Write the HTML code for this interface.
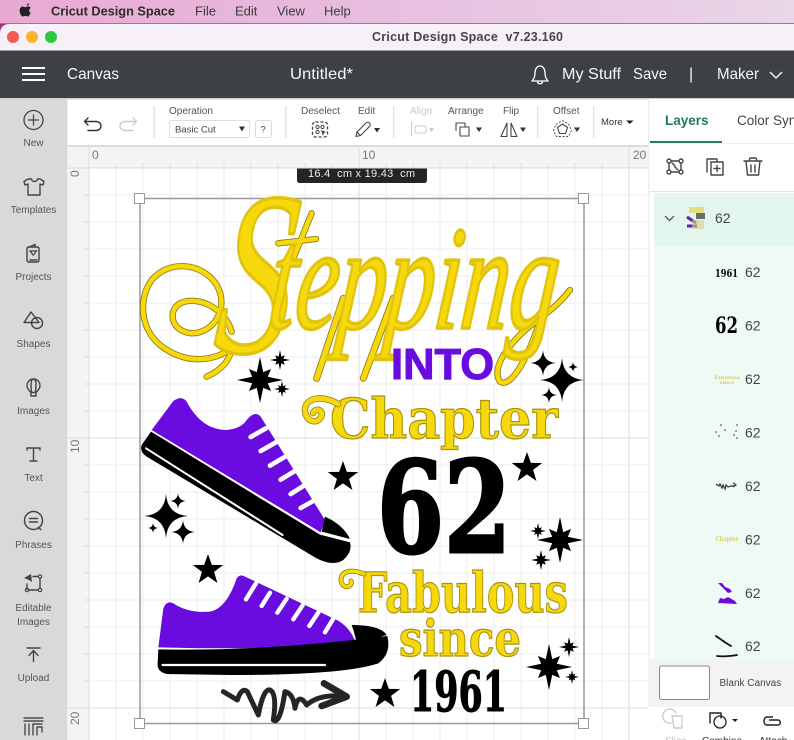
<!DOCTYPE html>
<html><head><meta charset="utf-8"><title>Cricut Design Space</title>
<style>
html,body{margin:0;padding:0;background:#fff;width:794px;height:740px;overflow:hidden}
svg{display:block;position:absolute;left:0;top:0;font-family:"Liberation Sans",sans-serif}
.side{font-size:10px;fill:#555;text-anchor:middle}
.tb{font-size:10px;fill:#555}
.ic{fill:none;stroke:#444;stroke-width:1.4;stroke-linecap:round;stroke-linejoin:round}
.rn{font-size:21px;fill:#444}
.y{fill:#f6d80c;stroke:#a8940f;stroke-width:1.2;font-family:"DejaVu Serif",serif;font-weight:bold}
.k{fill:#000;font-family:"DejaVu Serif",serif;font-weight:bold}
</style></head><body>
<svg width="794" height="740" viewBox="0 0 794 740" xmlns="http://www.w3.org/2000/svg">
<defs>
<linearGradient id="menu" x1="0" x2="1" y1="0" y2="0"><stop offset="0" stop-color="#e9a9d2"/><stop offset=".5" stop-color="#e8bfe0"/><stop offset="1" stop-color="#e9d6e8"/></linearGradient>
<path id="sp" d="M0-100Q7-7 100 0Q7 7 0 100Q-7 7-100 0Q-7-7 0-100Z"/>
<path id="st8" d="M0-100L14-34L48-48L34-14L100 0L34 14L48 48L14 34L0 100L-14 34L-48 48L-34 14L-100 0L-34-14L-48-48L-14-34Z"/>
<path id="st5" d="M0-100L24-32L95-31L38 12L59 81L0 40L-59 81L-38 12L-95-31L-24-32Z"/>
</defs>

<!-- macOS menu bar -->
<rect width="794" height="24" fill="url(#menu)"/>
<path transform="translate(2 -2.500)" d="M25 8.200c1 0 2-.9 2-2.300-1.200.1-2.300 1-2.200 2.300zM27.900 16.700c-.6 1.200-1.300 2.300-2.300 2.300s-1.100-.6-2.300-.6-1.400.6-2.300.6c-1.500 0-3.400-3.300-3.400-6 0-2.600 1.700-4 3.200-4 1 0 1.900.7 2.500.7s1.600-.8 2.700-.8c.7 0 2 .3 2.700 1.500-2.200 1.400-1.700 4.500.2 5.200z" fill="#222"/>
<text x="51" y="15.500" font-size="13" font-weight="bold" fill="#2d2a2e" textLength="124" lengthAdjust="spacingAndGlyphs">Cricut Design Space</text>
<g font-size="13" fill="#3c3a3e"><text x="195" y="15.500">File</text><text x="235" y="15.500">Edit</text><text x="277" y="15.500">View</text><text x="324" y="15.500">Help</text></g>

<!-- title bar -->
<path d="M0 35Q0 24 12 24H794V51H0Z" fill="#f6f0f8"/>
<rect y="23" width="794" height="1" fill="#8d7f8d"/>
<path d="M0 24H10Q0 24 0 34Z" fill="#a0308c"/>
<circle cx="13" cy="37" r="6" fill="#f25a52"/><circle cx="32" cy="37" r="6" fill="#f8b32b"/><circle cx="51" cy="37" r="6" fill="#2dc840"/>
<text x="372" y="41" font-size="12.500" font-weight="bold" fill="#454548" textLength="191" lengthAdjust="spacing" xml:space="preserve">Cricut Design Space  v7.23.160</text>

<!-- header -->
<rect y="50.500" width="794" height="48" fill="#3d4045"/>
<g fill="#fff"><rect x="22" y="67" width="23" height="2"/><rect x="22" y="73" width="23" height="2"/><rect x="22" y="79" width="23" height="2"/></g>
<g font-size="16" fill="#f6f6f6">
<text x="67" y="79" textLength="52" lengthAdjust="spacingAndGlyphs">Canvas</text><text x="290" y="79" textLength="63" lengthAdjust="spacingAndGlyphs">Untitled*</text>
<text x="562" y="79" textLength="59" lengthAdjust="spacingAndGlyphs">My Stuff</text><text x="633" y="79" textLength="34" lengthAdjust="spacingAndGlyphs">Save</text><text x="689" y="79">|</text><text x="717" y="79" textLength="42" lengthAdjust="spacingAndGlyphs">Maker</text>
</g>
<path d="M532 81c2-2 3-4 3-8 0-4 2-7 5-7s5 3 5 7c0 4 1 6 3 8zM537.500 81.500c.3 3 4.700 3 5 0" fill="none" stroke="#fff" stroke-width="1.300" stroke-linecap="round" stroke-linejoin="round"/>
<path d="M770 72l6 6 6-6" fill="none" stroke="#fff" stroke-width="1.300"/>

<!-- toolbar -->
<rect y="98.500" width="794" height="47" fill="#fff"/>
<rect y="145" x="67" width="581" height="2" fill="#dcdcdc"/>
<rect y="98" width="794" height="1.500" fill="#cfcfcf"/>
<g fill="#e4e4e4"><rect x="153.500" y="106" width="1.500" height="32"/><rect x="285" y="106" width="1.500" height="32"/><rect x="393" y="106" width="1.500" height="32"/><rect x="537" y="106" width="1.500" height="32"/><rect x="593" y="106" width="1.500" height="32"/></g>
<path class="ic" d="M88 118l-3.500 3.500 3.500 3.500M85 121.500h11c3 0 5 2 5 4.500s-2 4.500-5 4.500h-8" style="stroke:#333"/>
<path class="ic" d="M133 118l3.500 3.500-3.500 3.500M136 121.500h-11c-3 0-5 2-5 4.500s2 4.500 5 4.500h8" style="stroke:#ccc"/>
<text class="tb" x="169" y="114">Operation</text>
<rect x="169.500" y="120.500" width="80" height="17" rx="2" fill="#fff" stroke="#ddd"/>
<text x="175" y="132.500" font-size="9.500" fill="#444">Basic Cut</text>
<path d="M239 126.500h6l-3 5z" fill="#333"/>
<rect x="255.500" y="120.500" width="16" height="17" rx="2" fill="#fff" stroke="#ddd"/>
<text x="260.500" y="132.500" font-size="9.500" fill="#444">?</text>
<text class="tb" x="301" y="114">Deselect</text>
<rect x="312.500" y="122" width="15" height="15" rx="3" fill="none" stroke="#444" stroke-width="1.300" stroke-dasharray="3 2"/>
<g fill="none" stroke="#444"><circle cx="317.500" cy="127" r="1.600"/><circle cx="322.500" cy="127" r="1.600"/><circle cx="317.500" cy="132" r="1.600"/></g><path d="M321 130l5 2-2 1-1 3z" fill="#444"/>
<text class="tb" x="358" y="114">Edit</text>
<path class="ic" d="M356 136.500l1-4.500 9-9c1-1 2.500-1 3.500 0s.8 2.500 0 3.500l-9 9zM357 132l3.500 3.500" style="stroke-width:1.100"/>
<path d="M374 128h6l-3 4.500z" fill="#333"/>
<text class="tb" x="410" y="114" style="fill:#c9c9c9">Align</text>
<path d="M411.500 122v14" stroke="#ccc" stroke-width="1.200"/><rect x="415" y="126" width="11" height="7" rx="1.500" fill="none" stroke="#ccc"/><path d="M429 128h5l-2.500 4z" fill="#ccc"/>
<text class="tb" x="448" y="114">Arrange</text>
<path class="ic" d="M456 130.500v-7.500h9v4M460 127h9v9h-9z" style="stroke-width:1.100"/>
<path d="M476 127.500h6l-3 4.500z" fill="#333"/>
<text class="tb" x="503" y="114">Flip</text>
<path class="ic" d="M507 123l-6 13.500h6zM511 123l6 13.500h-6z" style="stroke-width:1.100"/>
<path d="M520 127.500h6l-3 4.500z" fill="#333"/>
<text class="tb" x="553" y="114">Offset</text>
<path class="ic" d="M562.500 124l5 3.500-2 6h-6l-2-6z" style="stroke-width:1.100"/>
<path d="M556 124.500l6.500-4 6.500 4 2.500 6-3 6h-12l-3-6z" fill="none" stroke="#444" stroke-width=".9" stroke-dasharray="2 1.600"/>
<path d="M574 127.500h6l-3 4.500z" fill="#333"/>
<text x="601" y="125" font-size="9.500" fill="#333">More</text>
<path d="M626 120.500h7.500l-3.750 3.500z" fill="#222"/>

<!-- sidebar -->
<rect y="99" width="67" height="641" fill="#d9d9d9"/>
<circle cx="33.500" cy="120" r="9.500" fill="none" stroke="#444" stroke-width="1.300"/><path d="M33.500 114.500v11M28 120h11" stroke="#444" stroke-width="1.300"/>
<text class="side" x="33.500" y="146">New</text>
<path class="ic" d="M28 179l-4 2.500 1 3.500 3-1v11h12v-11l3 1 1-3.500-4-2.500-2.500 0c-.5 2-1.500 2.500-3 2.500s-2.500-.5-3-2.500z"/>
<text class="side" x="33.500" y="213">Templates</text>
<rect x="27" y="247" width="12" height="15" rx="1.500" class="ic"/><path class="ic" d="M29 247l6-2.500v2.500M30 260h7"/><path d="M30 251h6.500l-3.250 4.200z" fill="none" stroke="#444" stroke-width="1.200"/>
<text class="side" x="33.500" y="280">Projects</text>
<path class="ic" d="M31 312l-7 10.500h15z"/><circle class="ic" cx="37" cy="323" r="5.500"/>
<text class="side" x="33.500" y="347">Shapes</text>
<path class="ic" d="M33.500 379c-3.800 0-6.500 3-6.500 6.500 0 3 2 5 4 7h5c2-2 4-4 4-7 0-3.500-2.700-6.500-6.500-6.500zM33.500 379c-1.800 0-2.500 3-2.500 6.500 0 3 .5 5 .5 7M33.500 379c1.800 0 2.500 3 2.500 6.500 0 3-.5 5-.5 7M31 392.500h5v3.500h-5z"/>
<text class="side" x="33.500" y="414">Images</text>
<path class="ic" d="M27 450v-2h13v2M33.500 448v13M30 461h7"/>
<text class="side" x="33.500" y="481">Text</text>
<circle class="ic" cx="33.500" cy="520.500" r="9"/><path class="ic" d="M29.500 518.500h8M29.500 522h8M38 527.500l3 2"/>
<text class="side" x="33.500" y="548">Phrases</text>
<path d="M24 578l7-4 1 8-3-2z" fill="#444"/>
<path class="ic" d="M27 584v5.500M29 590h9M40 578v10M33 576.500h5"/>
<g fill="none" stroke="#444" stroke-width="1.200"><circle cx="27" cy="590" r="1.700"/><circle cx="40" cy="590" r="1.700"/><circle cx="40" cy="576.500" r="1.700"/></g>
<text class="side" x="33.500" y="611">Editable</text>
<text class="side" x="33.500" y="625">Images</text>
<path class="ic" d="M27 648h13M33.500 661.500v-10M29 655.500l4.500-5 4.500 5"/>
<text class="side" x="33.500" y="681">Upload</text>
<path class="ic" d="M24 718h19M24 721h19M25 735v-11M29 735v-11M33 735v-11h9M37 735v-8h5v5" style="stroke-width:1.200;stroke:#333"/>
<rect x="67" y="99" width="1" height="641" fill="#efefef"/>

<!-- rulers and canvas -->
<rect x="68" y="147" width="580" height="593" fill="#fff"/>
<rect x="68" y="147" width="580" height="21" fill="#f4f4f4"/>
<rect x="68" y="168" width="21" height="572" fill="#f4f4f4"/>
<g stroke="#ecedf0" stroke-width="1">
<path d="M116 168V740M143 168V740M170 168V740M197 168V740M224 168V740M251 168V740M278 168V740M305 168V740M332 168V740M386 168V740M413 168V740M440 168V740M467 168V740M494 168V740M521 168V740M548 168V740M575 168V740M602 168V740"/>
<path d="M89 195H648M89 222H648M89 249H648M89 276H648M89 303H648M89 330H648M89 357H648M89 384H648M89 411H648M89 465H648M89 492H648M89 519H648M89 546H648M89 573H648M89 600H648M89 627H648M89 654H648M89 681H648"/>
</g>
<g stroke="#dcdcde" stroke-width="1">
<path d="M89 147V740M359 147V740M629 147V740M68 168H648M68 438H648M68 708H648"/>
<path d="M116 163V168M143 163V168M170 163V168M197 163V168M224 163V168M251 163V168M278 163V168M305 163V168M332 163V168M386 163V168M413 163V168M440 163V168M467 163V168M494 163V168M521 163V168M548 163V168M575 163V168M602 163V168"/>
<path d="M84 195H89M84 222H89M84 249H89M84 276H89M84 303H89M84 330H89M84 357H89M84 384H89M84 411H89M84 465H89M84 492H89M84 519H89M84 546H89M84 573H89M84 600H89M84 627H89M84 654H89M84 681H89"/>
</g>
<g font-size="12" fill="#777">
<text x="92" y="159">0</text><text x="362" y="159">10</text><text x="633" y="159">20</text>
<text transform="translate(79 177) rotate(-90)">0</text><text transform="translate(79 453) rotate(-90)">10</text><text transform="translate(79 725) rotate(-90)">20</text>
</g>

<!-- tooltip -->
<path d="M297 168.500H427V180Q427 183 424 183H300Q297 183 297 180Z" fill="#242424"/>
<text x="308" y="177" font-size="11" fill="#eee" xml:space="preserve" textLength="107" lengthAdjust="spacing">16.4  cm x 19.43  cm</text>

<!-- selection -->
<rect x="140" y="198.500" width="444" height="525" fill="none" stroke="#999" stroke-width="1.500"/>
<g fill="#fff" stroke="#999" stroke-width="1"><rect x="134.500" y="193.500" width="10" height="10"/><rect x="578.500" y="193.500" width="10" height="10"/><rect x="134.500" y="718.500" width="10" height="10"/><rect x="578.500" y="718.500" width="10" height="10"/></g>

<!-- flourishes of the script heading -->
<g transform="translate(130 165) scale(.3333)" fill="none" stroke-linecap="round">
<path d="M230 635C275 615 300 585 305 550C250 590 165 600 90 540C30 490 25 400 65 345C115 285 215 290 260 360C300 430 250 505 185 505C125 500 110 440 150 415C205 390 285 430 305 500M1110 650C1090 620 1110 570 1170 510C1220 460 1270 440 1320 375M1110 650C1140 670 1190 590 1225 480M545 145L490 280M445 235L558 222" stroke="#8a7a14" stroke-width="19"/>
<path d="M230 635C275 615 300 585 305 550C250 590 165 600 90 540C30 490 25 400 65 345C115 285 215 290 260 360C300 430 250 505 185 505C125 500 110 440 150 415C205 390 285 430 305 500M1110 650C1090 620 1110 570 1170 510C1220 460 1270 440 1320 375M1110 650C1140 670 1190 590 1225 480M545 145L490 280M445 235L558 222" stroke="#f6d80c" stroke-width="14"/>
<path d="M560 640L640 400M700 640L790 400" stroke="#8a7a14" stroke-width="21"/>
<path d="M560 640L640 400M700 640L790 400" stroke="#f6d80c" stroke-width="16"/>
</g>

<!-- heading text -->
<text transform="skewX(-6) scale(.65 1)" fill="#f6d80c" stroke="#e0c40c" stroke-width="3.500" stroke-linejoin="round" font-family="Liberation Serif,serif" font-style="italic"><tspan x="383" y="352" font-size="233">S</tspan><tspan x="462" y="328" font-size="148">tepping</tspan></text>
<text x="391" y="379" font-size="44" font-weight="bold" fill="#6a0ce0" textLength="103" lengthAdjust="spacingAndGlyphs" stroke="#6a0ce0" stroke-width="1">INTO</text>
<text class="y" x="330" y="438" font-size="55" textLength="228" lengthAdjust="spacingAndGlyphs">Chapter</text>
<path d="M338 404C322 394 304 398 305 411C306 423 320 425 322 414C320 408 315 409 313 413" fill="none" stroke="#8a7a14" stroke-width="6.500" stroke-linecap="round"/>
<path d="M338 404C322 394 304 398 305 411C306 423 320 425 322 414C320 408 315 409 313 413" fill="none" stroke="#f6d80c" stroke-width="5" stroke-linecap="round"/>
<text class="k" x="377" y="552" font-size="126" textLength="134" lengthAdjust="spacingAndGlyphs" stroke="#000" stroke-width="3">62</text>
<text class="y" x="358" y="612" font-size="55" textLength="210" lengthAdjust="spacingAndGlyphs">Fabulous</text>
<path d="M364 574C350 568 340 572 341 581C343 590 353 587 351 581" fill="none" stroke="#8a7a14" stroke-width="5" stroke-linecap="round"/>
<path d="M364 574C350 568 340 572 341 581C343 590 353 587 351 581" fill="none" stroke="#f6d80c" stroke-width="3.500" stroke-linecap="round"/>
<text class="y" x="399" y="656" font-size="50" textLength="122" lengthAdjust="spacingAndGlyphs">since</text>
<text class="k" x="410" y="711" font-size="55" textLength="97" lengthAdjust="spacingAndGlyphs" stroke="#000" stroke-width="1">1961</text>

<!-- sneakers -->
<g transform="translate(130 385) scale(.3333)">
<path d="M65 135L130 48Q155 30 170 50Q215 135 290 135Q335 130 350 105Q375 75 392 95L585 405L572 442Z" fill="#6a0ce0"/>
<path d="M585 395Q640 420 660 462L575 440ZM63 140L35 180Q28 200 50 215L560 520Q610 545 640 525Q668 500 660 472L570 449Z" fill="#000"/>
<path d="M48 190L458 450" stroke="#fff" stroke-width="6" stroke-linecap="round"/>
<path d="M362 156L408 130M392 198L438 172M420 242L466 215M452 284L498 256M482 327L528 298M512 369L555 345" stroke="#fff" stroke-width="14" stroke-linecap="round"/>
</g>
<g transform="translate(130 550) scale(.3333)">
<path d="M85 292L100 175Q110 150 130 160Q175 190 240 185Q290 175 320 85Q330 70 345 80L610 205Q660 225 680 285Q400 300 85 292Z" fill="#6a0ce0"/>
<path d="M665 225Q750 225 770 255L680 282Q675 250 665 225ZM85 298Q400 305 772 258Q785 310 745 340Q640 375 300 375L110 372Q80 365 83 340Z" fill="#000"/>
<path d="M98 345H585" stroke="#fff" stroke-width="7" stroke-linecap="round"/>
<path d="M348 148L378 100M395 168L420 128M442 188L470 146M490 208L518 166M538 228L566 186M585 247L610 206" stroke="#fff" stroke-width="13" stroke-linecap="round"/>
<path d="M280 425L322 450Q335 410 352 425L385 495Q400 415 420 420Q442 430 430 510Q450 525 465 425Q490 430 495 475Q505 425 530 465Q570 430 645 440" fill="none" stroke="#252525" stroke-width="15" stroke-linecap="round" stroke-linejoin="round"/>
<path d="M582 400L650 440L575 468" fill="none" stroke="#252525" stroke-width="20" stroke-linecap="round" stroke-linejoin="round"/>
</g>

<!-- stars -->
<g fill="#000">
<use href="#st8" transform="translate(260 380) scale(.23)"/><use href="#st8" transform="translate(280 360) scale(.1)"/><use href="#st8" transform="translate(282 389) scale(.08)"/>
<use href="#sp" transform="translate(562 380) scale(.22)"/><use href="#sp" transform="translate(543 363) scale(.13)"/><use href="#sp" transform="translate(573 367) scale(.05)"/><use href="#sp" transform="translate(549 395) scale(.08)"/>
<use href="#sp" transform="translate(166 516) scale(.22)"/><use href="#sp" transform="translate(178 501) scale(.08)"/><use href="#sp" transform="translate(183 532) scale(.12)"/><use href="#sp" transform="translate(153 528) scale(.05)"/>
<use href="#st8" transform="translate(560 540) scale(.23)"/><use href="#st8" transform="translate(538 531) scale(.08)"/><use href="#st8" transform="translate(541 560) scale(.1)"/>
<use href="#st8" transform="translate(549 667) scale(.23)"/><use href="#st8" transform="translate(569 647) scale(.1)"/><use href="#st8" transform="translate(572 677) scale(.07)"/>
<use href="#st5" transform="translate(343 477) scale(.16)"/><use href="#st5" transform="translate(527 468) scale(.16)"/><use href="#st5" transform="translate(208 570) scale(.16)"/><use href="#st5" transform="translate(385 694) scale(.16)"/>
</g>

<!-- layers panel -->
<rect x="648" y="99" width="146" height="641" fill="#fff"/>
<rect x="648" y="99" width="1.500" height="641" fill="#efefef"/>
<text x="665" y="125" font-size="13.500" font-weight="bold" fill="#217a5c">Layers</text>
<text x="737" y="125" font-size="13.500" fill="#444">Color Sync</text>
<rect x="650" y="141" width="72" height="2.500" fill="#1f7f5f"/>
<rect x="650" y="143" width="144" height="1" fill="#eee"/>
<g class="ic" fill="none" stroke="#333" stroke-width="1.300">
<path d="M671 161h8M669 163v7M681 163v7M671 172h8M672 163l3 3M678 170l-3-3" />
<circle cx="669" cy="161" r="2"/><circle cx="681" cy="161" r="2"/><circle cx="669" cy="172" r="2"/><circle cx="681" cy="172" r="2"/>
<path d="M707 172v-13h10v3M711 162h12v13h-12zM717 165.500v6M714 168.500h6"/>
<path d="M744 161h18M749 161l1-3h6l1 3M746 161l1.500 14h11l1.500-14M751 165v7M755 165v7"/>
</g>
<rect x="650" y="191" width="144" height="1" fill="#e5e5e5"/>
<rect x="654" y="193" width="140" height="53" fill="#e2f5ef"/>
<rect x="654" y="246" width="140" height="413" fill="#effaf7"/>
<path d="M665 216l4.500 4.500 4.500-4.500" fill="none" stroke="#444" stroke-width="1.200"/>
<rect x="689" y="207" width="15" height="6" fill="#e8dc80"/><rect x="696" y="213" width="9" height="6" fill="#333" opacity=".7"/>
<path d="M687 217l9 6" stroke="#5a20c0" stroke-width="3"/><path d="M687 226h10" stroke="#5a20c0" stroke-width="3"/><rect x="692" y="220" width="12" height="9" fill="#d8d080" opacity=".6"/>
<text class="rn" x="715" y="223" style="font-size:14px">62</text>
<g font-size="14" fill="#444">
<text x="745" y="277">62</text><text x="745" y="330.500">62</text><text x="745" y="384">62</text><text x="745" y="437.500">62</text><text x="745" y="491">62</text><text x="745" y="544.500">62</text><text x="745" y="598">62</text><text x="745" y="651">62</text>
</g>
<text class="k" x="715" y="277" font-size="11" textLength="23" lengthAdjust="spacingAndGlyphs">1961</text>
<text class="k" x="715" y="333" font-size="22" textLength="23" lengthAdjust="spacingAndGlyphs">62</text>
<text x="727" y="379" font-size="5" font-weight="bold" font-family="DejaVu Serif,serif" fill="#d9cc60" text-anchor="middle">Fabulous</text>
<text x="727" y="384" font-size="5" font-weight="bold" font-family="DejaVu Serif,serif" fill="#d9cc60" text-anchor="middle">since</text>
<g fill="#333"><circle cx="721" cy="425" r=".8"/><circle cx="737" cy="425" r=".8"/><circle cx="716" cy="432" r=".8"/><circle cx="725" cy="430" r=".8"/><circle cx="736" cy="431" r=".8"/><circle cx="719" cy="436" r=".8"/><circle cx="737" cy="438" r=".8"/><circle cx="734" cy="435" r=".8"/></g>
<path d="M716 484l3 2 1-2 2 4 1-3 2 4 1-4 2 2 3-1h4M733 483l3 2-3 2" fill="none" stroke="#333" stroke-width="1.200"/>
<text x="727" y="541" font-size="6" font-weight="bold" font-family="DejaVu Serif,serif" fill="#ddd35a" text-anchor="middle" textLength="23" lengthAdjust="spacingAndGlyphs">Chapter</text>
<path d="M718 583l4 0 3 4 5 2 2 3-4 1zM718 603l2-5 4 1 4-2 7 4 2 3z" fill="#6a0ce0"/>
<path d="M716 636l10 7 5 3M717 656c7 1 14 0 20-1" fill="none" stroke="#111" stroke-width="1.800" stroke-linecap="round"/>

<rect x="648" y="659" width="146" height="48" fill="#f4f3f3"/>
<rect x="659.500" y="666" width="50" height="33.500" rx="2" fill="#fff" stroke="#888"/>
<text x="719.500" y="686" font-size="10" fill="#444">Blank Canvas</text>
<rect x="648" y="707" width="146" height="33" fill="#fff"/>
<path class="ic" style="stroke:#ccc" d="M671 723a7 7 0 1 1 5-10M672 716h10v12h-8z"/>
<path class="ic" style="stroke:#222" d="M710 723v-10h11v5"/><circle cx="720" cy="722" r="6" fill="none" stroke="#222" stroke-width="1.300"/>
<path d="M732 719h6l-3 3z" fill="#222"/>
<path d="M773 717h-6c-4 0-4 8 0 8h11c3 0 3-5 0-5h-9" fill="none" stroke="#222" stroke-width="1.500"/>
<text x="665" y="744" font-size="10" fill="#bbb">Slice</text>
<text x="702" y="744" font-size="10" fill="#333">Combine</text>
<text x="759" y="744" font-size="10" fill="#333">Attach</text>
</svg>
</body></html>
